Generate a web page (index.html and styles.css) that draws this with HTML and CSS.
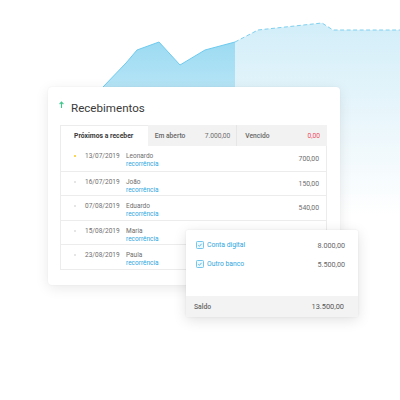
FILE: index.html
```
<!DOCTYPE html>
<html>
<head>
<meta charset="utf-8">
<link rel="stylesheet" href="styles.css">
</head>
<body>
<div class="stage">
  <svg class="chart" width="400" height="230" viewBox="0 0 400 230">
    <defs>
      <linearGradient id="solid" gradientUnits="userSpaceOnUse" x1="0" y1="40" x2="0" y2="100">
        <stop offset="0" stop-color="#9adaf2"/>
        <stop offset="1" stop-color="#bde7f7"/>
      </linearGradient>
      <linearGradient id="light" gradientUnits="userSpaceOnUse" x1="0" y1="25" x2="0" y2="215">
        <stop offset="0" stop-color="#d3eef9"/>
        <stop offset="0.6" stop-color="#eef8fc"/>
        <stop offset="1" stop-color="#ffffff"/>
      </linearGradient>
    </defs>
    <path d="M235,42 L258,30 L322,23 L333,30 L400,30 L400,230 L235,230 Z" fill="url(#light)"/>
    <path d="M235,42 L258,30 L322,23 L333,30 L400,30" fill="none" stroke="#7fd0ef" stroke-width="1" stroke-dasharray="4 2.5"/>
    <path d="M90,100 L103,87 L126,63 L137,50 L159,42 L180,65 L205,50 L235,42 L235,120 L90,120 Z" fill="url(#solid)"/>
    <path d="M90,100 L103,87 L126,63 L137,50 L159,42 L180,65 L205,50 L235,42" fill="none" stroke="#6ecbef" stroke-width="1"/>
  </svg>

  <div class="card">
    <div class="card-title">
      <svg class="up" width="5" height="7" viewBox="0 0 5 7"><path d="M2.5,7 V1.2 M0.6,3.2 L2.5,1 L4.4,3.2" fill="none" stroke="#3ec88c" stroke-width="1.1"/></svg>
      <span>Recebimentos</span>
    </div>
    <div class="table">
      <div class="thead">
        <div class="tab active">Próximos a receber</div>
        <div class="tab grey"><span>Em aberto</span><span>7.000,00</span></div>
        <div class="tab grey sep"><span>Vencido</span><span class="red">0,00</span></div>
      </div>
      <div class="row">
        <span class="dot yellow"></span>
        <span class="date">13/07/2019</span>
        <span class="who">Leonardo<span class="rec">recorrência</span></span>
        <span class="amt">700,00</span>
      </div>
      <div class="row">
        <span class="dot"></span>
        <span class="date">16/07/2019</span>
        <span class="who">João<span class="rec">recorrência</span></span>
        <span class="amt">150,00</span>
      </div>
      <div class="row">
        <span class="dot"></span>
        <span class="date">07/08/2019</span>
        <span class="who">Eduardo<span class="rec">recorrência</span></span>
        <span class="amt">540,00</span>
      </div>
      <div class="row">
        <span class="dot"></span>
        <span class="date">15/08/2019</span>
        <span class="who">Maria<span class="rec">recorrência</span></span>
        <span class="amt"></span>
      </div>
      <div class="row last">
        <span class="dot"></span>
        <span class="date">23/08/2019</span>
        <span class="who">Paula<span class="rec">recorrência</span></span>
        <span class="amt"></span>
      </div>
    </div>
  </div>

  <div class="popup">
    <div class="pbody">
      <div class="prow">
        <svg class="chk" width="8" height="8" viewBox="0 0 8 8"><rect x="0.5" y="0.5" width="7" height="7" rx="0.8" fill="#eef8fd" stroke="#74c6ec" stroke-width="1"/><path d="M2.3,4.3 L3.4,5.3 L5.6,2.8" fill="none" stroke="#3fa4d6" stroke-width="0.8"/></svg>
        <span class="plabel">Conta digital</span>
        <span class="pamt">8.000,00</span>
      </div>
      <div class="prow">
        <svg class="chk" width="8" height="8" viewBox="0 0 8 8"><rect x="0.5" y="0.5" width="7" height="7" rx="0.8" fill="#eef8fd" stroke="#74c6ec" stroke-width="1"/><path d="M2.3,4.3 L3.4,5.3 L5.6,2.8" fill="none" stroke="#3fa4d6" stroke-width="0.8"/></svg>
        <span class="plabel">Outro banco</span>
        <span class="pamt">5.500,00</span>
      </div>
    </div>
    <div class="pfoot">
      <span>Saldo</span>
      <span class="pamt">13.500,00</span>
    </div>
  </div>
</div>
</body>
</html>
```

FILE: styles.css
```
* { box-sizing: border-box; }
html, body { margin: 0; padding: 0; background: #fff; }
body { font-family: Roboto, "Liberation Sans", sans-serif; }

.stage {
  position: relative;
  width: 400px;
  height: 400px;
  overflow: hidden;
  display: flow-root;
}

.chart {
  position: absolute;
  left: 0;
  top: 0;
}

.card {
  position: relative;
  margin: 87px 0 0 48px;
  width: 292px;
  height: 198px;
  background: #fff;
  border-radius: 4px;
  box-shadow: 0 3px 14px rgba(0, 0, 0, 0.09), 0 0 2px rgba(0, 0, 0, 0.06);
  padding: 14px 13px 0 12px;
}

.card-title {
  display: flex;
  align-items: center;
  height: 14px;
  color: #3a3a3a;
  font-size: 11.6px;
}
.card-title .up { margin: -7px 7px 0 -1px; }

.table {
  margin-top: 10px;
  width: 267px;
  border: 1px solid #ececec;
  border-top: none;
  font-size: 6.5px;
  color: #6e6e6e;
}

.thead {
  display: flex;
  height: 21px;
}
.tab {
  display: flex;
  align-items: center;
  justify-content: space-between;
}
.tab.active {
  width: 88px;
  padding-left: 13px;
  font-weight: 700;
  font-size: 6.8px;
  color: #3a3a3a;
  background: #fff;
  border-top: 1px solid #ececec;
  margin-left: -1px;
  border-left: 1px solid #ececec;
}
.tab.grey {
  background: #f2f2f2;
  width: 89px;
  padding: 0 6px 0 7px;
  font-size: 6.7px;
}
.tab.sep {
  border-left: 1px solid #e6e6e6;
  width: 91px;
  padding: 0 7px 0 8px;
  margin-right: -1px;
}
.tab.grey span:first-child { font-weight: 500; color: #666; }
.red { color: #ef4a5d; font-weight: 400; }

.row {
  display: flex;
  align-items: flex-start;
  height: 24.6px;
  padding: 6px 7px 0 13px;
  border-top: 1px solid #ececec;
}
.thead + .row { border-top: none; }

.dot {
  width: 2px;
  height: 2px;
  border-radius: 50%;
  background: #dcdcdc;
  margin: 3px 9px 0 0;
  flex: none;
}
.dot.yellow { background: #f8c71e; }

.date {
  width: 41px;
  line-height: 8px;
  flex: none;
}
.who {
  display: flex;
  flex-direction: column;
  line-height: 8px;
  flex: 1;
}
.rec { color: #2ea6de; }
.amt {
  align-self: center;
  margin-top: -5px;
  font-size: 6.8px;
}

.popup {
  position: absolute;
  left: 186px;
  top: 230px;
  width: 172px;
  height: 87px;
  background: #fff;
  border-radius: 2px;
  box-shadow: 0 3px 14px rgba(0, 0, 0, 0.12), 0 0 2px rgba(0, 0, 0, 0.08);
  display: flex;
  flex-direction: column;
  overflow: hidden;
}
.pbody {
  flex: 1;
  padding: 10px 13px 0 10px;
  display: flex;
  flex-direction: column;
  gap: 9px;
}
.prow {
  display: flex;
  align-items: center;
  height: 10px;
  font-size: 6.8px;
}
.chk { margin-right: 3px; flex: none; }
.plabel { color: #2ea6de; flex: 1; }
.pamt { color: #666; font-size: 7.2px; }

.pfoot {
  height: 21px;
  background: #f3f3f3;
  display: flex;
  align-items: center;
  justify-content: space-between;
  padding: 0 14px 0 8px;
  font-size: 6.8px;
  color: #666;
  font-weight: 500;
}
.pfoot .pamt { font-weight: 400; font-size: 7.4px; color: #555; }
```
